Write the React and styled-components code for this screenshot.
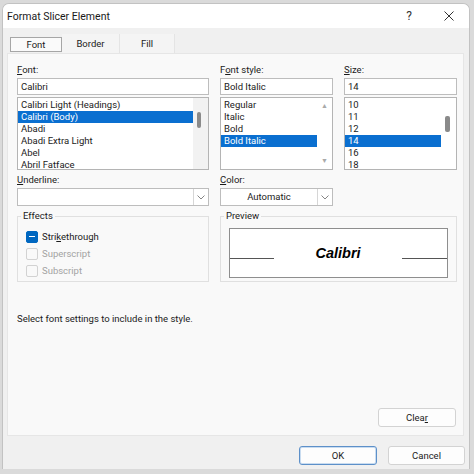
import styled, { createGlobalStyle, css } from 'styled-components'

const GlobalStyle = createGlobalStyle`
  html, body {
    margin: 0;
    padding: 0;
    background: #dadada;
  }
  body {
    font-family: Roboto, "Liberation Sans", sans-serif;
    font-size: 9.5px;
    color: #1b1b1b;
  }
  * { box-sizing: border-box; }
`

const Window = styled.div`
  margin: 3px 4px 0 2px;
  height: 466px;
  border: 1px solid #c2c2c2;
  border-bottom: 0;
  border-radius: 7px 7px 0 0;
  background: #f0f0f0;
  display: flex;
  flex-direction: column;
  overflow: hidden;
`

const TitleBar = styled.div`
  height: 24px;
  background: #ffffff;
  display: flex;
  align-items: center;
  padding-left: 4px;
`

const Title = styled.div`
  flex: 1;
  font-size: 10.5px;
  color: #1a1a1a;
`

const Caption = styled.div`
  width: 40px;
  height: 24px;
  display: flex;
  align-items: center;
  justify-content: center;
  font-size: 12px;
  color: #333;
`

const Body = styled.div`
  flex: 1;
  display: flex;
  flex-direction: column;
  padding: 6px 4px 0 4px;
`

const TabRow = styled.div`
  height: 19px;
  display: flex;
  padding-left: 3px;
`

const Tab = styled.div`
  display: flex;
  align-items: center;
  justify-content: center;
  ${p => p.active ? css`
    width: 52px;
    height: 15px;
    margin-top: 3px;
    border: 1px solid #a6a6a6;
    background: #fafafa;
  ` : css`
    width: ${p.w}px;
    height: 19px;
    background: #f4f4f4;
    border-right: 1px solid #e4e4e4;
  `}
`

const Panel = styled.div`
  flex: 0 0 383px;
  margin-right: 1px;
  background: #f9f9f9;
  border: 1px solid #e6e6e6;
  padding: 9px 6px 8px 9px;
  display: flex;
  flex-direction: column;
`

const Grid = styled.div`
  display: grid;
  grid-template-columns: 192px 113px 113px;
  column-gap: 11px;
`

const Field = styled.div`
  display: flex;
  flex-direction: column;
  margin-top: ${p => p.top || 0}px;
`

const Label = styled.div`
  height: 14px;
  line-height: 14px;
  margin-bottom: 1px;
`

const Input = styled.div`
  height: 17px;
  line-height: 15px;
  background: #fff;
  border: 1px solid #bdbdbd;
  padding-left: 3px;
`

const List = styled.div`
  margin-top: 2px;
  height: 73px;
  background: #fff;
  border: 1px solid #b4b4b4;
  display: flex;
`

const Items = styled.div`
  flex: 1;
  padding-top: 0.5px;
`

const Item = styled.div`
  height: 12px;
  line-height: 12px;
  padding-left: 3px;
  white-space: nowrap;
  ${p => p.selected && css`
    background: #0a6fd0;
    color: #fff;
  `}
`

const ScrollBar = styled.div`
  width: 15px;
  background: ${p => p.plain ? '#fff' : '#f2f2f2'};
  position: relative;
  display: flex;
  flex-direction: column;
  align-items: center;
  justify-content: space-between;
  padding: 4px 0 4px;
  color: #a9a9a9;
  font-size: 7px;
`

const Thumb = styled.div`
  position: absolute;
  left: 4px;
  top: ${p => p.top}px;
  width: ${p => p.w}px;
  height: 16px;
  border-radius: 2px;
  background: #8a8a8a;
`

const Select = styled.div`
  height: 18px;
  background: #fff;
  border: 1px solid #bdbdbd;
  display: flex;
`

const SelectText = styled.div`
  flex: 1;
  line-height: 16px;
  text-align: center;
`

const SelectButton = styled.div`
  width: 15px;
  border-left: 1px solid #d6d6d6;
  display: flex;
  align-items: center;
  justify-content: center;
`

const Group = styled.fieldset`
  margin: 4px 0 0 0;
  padding: 6px 8px 2px 8px;
  border: 1px solid #e0e0e0;
  min-width: 0;
  grid-column: ${p => p.span || 'auto'};
`

const Legend = styled.legend`
  margin-left: -5px;
  padding: 0 2px;
  height: 12px;
  line-height: 12px;
`

const CheckRow = styled.div`
  height: 17px;
  display: flex;
  align-items: center;
  gap: 4px;
  color: ${p => p.disabled ? '#a3a3a3' : '#1b1b1b'};
`

const Box = styled.div`
  width: 12px;
  height: 12px;
  border-radius: 2px;
  display: flex;
  align-items: center;
  justify-content: center;
  ${p => p.checked ? css`
    background: #0067c0;
    border: 1px solid #0067c0;
  ` : css`
    background: #f9f9f9;
    border: 1px solid #d2d2d2;
  `}
`

const Dash = styled.div`
  width: 6px;
  height: 1.5px;
  background: #fff;
`

const PreviewBox = styled.div`
  height: 50px;
  background: #fff;
  border: 1px solid #8e8e8e;
  display: flex;
  align-items: flex-start;
`

const Rule = styled.div`
  width: ${p => p.w}px;
  height: 30px;
  border-bottom: 1px solid #555;
`

const PreviewText = styled.div`
  flex: 1;
  text-align: center;
  padding-top: 17px;
  line-height: 14.5px;
  font-family: "Liberation Sans", Arial, sans-serif;
  font-size: 14.5px;
  font-weight: bold;
  font-style: italic;
  color: #000;
`

const Message = styled.div`
  margin-top: 31px;
  height: 12px;
  line-height: 12px;
`

const ClearRow = styled.div`
  margin-top: auto;
  display: flex;
  justify-content: flex-end;
  padding-right: 1px;
`

const Footer = styled.div`
  flex: 1;
  display: flex;
  justify-content: flex-end;
  align-items: flex-start;
  gap: 11px;
  padding-top: 10px;
`

const Button = styled.div`
  width: ${p => p.w || 78}px;
  height: 19px;
  line-height: 17px;
  text-align: center;
  background: #fdfdfd;
  border: 1px solid ${p => p.primary ? '#5d90c9' : '#d3d3d3'};
  border-radius: 3px;
  box-shadow: ${p => p.primary ? 'inset 0 0 0 1px #c9dcf0' : 'none'};
`

const Chevron = () => (
  <svg width="8" height="5" viewBox="0 0 8 5">
    <polyline points="0.5,0.5 4,4 7.5,0.5" fill="none" stroke="#777" strokeWidth="0.9" />
  </svg>
)

const CloseIcon = () => (
  <svg width="10" height="10" viewBox="0 0 10 10">
    <path d="M0.5 0.5 L9.5 9.5 M9.5 0.5 L0.5 9.5" stroke="#333" strokeWidth="1" />
  </svg>
)

const fonts = ['Calibri Light (Headings)', 'Calibri (Body)', 'Abadi', 'Abadi Extra Light', 'Abel', 'Abril Fatface']
const styles = ['Regular', 'Italic', 'Bold', 'Bold Italic']
const sizes = ['10', '11', '12', '14', '16', '18']

export default function App() {
  return (
    <>
      <GlobalStyle />
      <Window>
        <TitleBar>
          <Title>Format Slicer Element</Title>
          <Caption>?</Caption>
          <Caption><CloseIcon /></Caption>
        </TitleBar>
        <Body>
          <TabRow>
            <Tab active>Font</Tab>
            <Tab w={58}>Border</Tab>
            <Tab w={55}>Fill</Tab>
          </TabRow>
          <Panel>
            <Grid>
              <Field>
                <Label><u>F</u>ont:</Label>
                <Input>Calibri</Input>
                <List>
                  <Items>
                    {fonts.map(f => <Item key={f} selected={f === 'Calibri (Body)'}>{f}</Item>)}
                  </Items>
                  <ScrollBar><Thumb top={14} w={4} /></ScrollBar>
                </List>
              </Field>
              <Field>
                <Label>F<u>o</u>nt style:</Label>
                <Input>Bold Italic</Input>
                <List>
                  <Items>
                    {styles.map(s => <Item key={s} selected={s === 'Bold Italic'}>{s}</Item>)}
                  </Items>
                  <ScrollBar plain><span>▲</span><span>▼</span></ScrollBar>
                </List>
              </Field>
              <Field>
                <Label><u>S</u>ize:</Label>
                <Input>14</Input>
                <List>
                  <Items>
                    {sizes.map(s => <Item key={s} selected={s === '14'}>{s}</Item>)}
                  </Items>
                  <ScrollBar plain><Thumb top={18} w={5} /></ScrollBar>
                </List>
              </Field>

              <Field top={3}>
                <Label><u>U</u>nderline:</Label>
                <Select>
                  <SelectText />
                  <SelectButton><Chevron /></SelectButton>
                </Select>
              </Field>
              <Field top={3}>
                <Label><u>C</u>olor:</Label>
                <Select>
                  <SelectText>Automatic</SelectText>
                  <SelectButton><Chevron /></SelectButton>
                </Select>
              </Field>
              <div />

              <Group>
                <Legend>Effects</Legend>
                <CheckRow>
                  <Box checked><Dash /></Box>
                  <span>Stri<u>k</u>ethrough</span>
                </CheckRow>
                <CheckRow disabled>
                  <Box />
                  <span>Superscript</span>
                </CheckRow>
                <CheckRow disabled>
                  <Box />
                  <span>Subscript</span>
                </CheckRow>
              </Group>
              <Group span="2 / span 2">
                <Legend>Preview</Legend>
                <PreviewBox>
                  <Rule w={44} />
                  <PreviewText>Calibri</PreviewText>
                  <Rule w={45} />
                </PreviewBox>
              </Group>
            </Grid>
            <Message>Select font settings to include in the style.</Message>
            <ClearRow>
              <Button>Clea<u>r</u></Button>
            </ClearRow>
          </Panel>
          <Footer>
            <Button primary>OK</Button>
            <Button w={77}>Cancel</Button>
          </Footer>
        </Body>
      </Window>
    </>
  )
}
